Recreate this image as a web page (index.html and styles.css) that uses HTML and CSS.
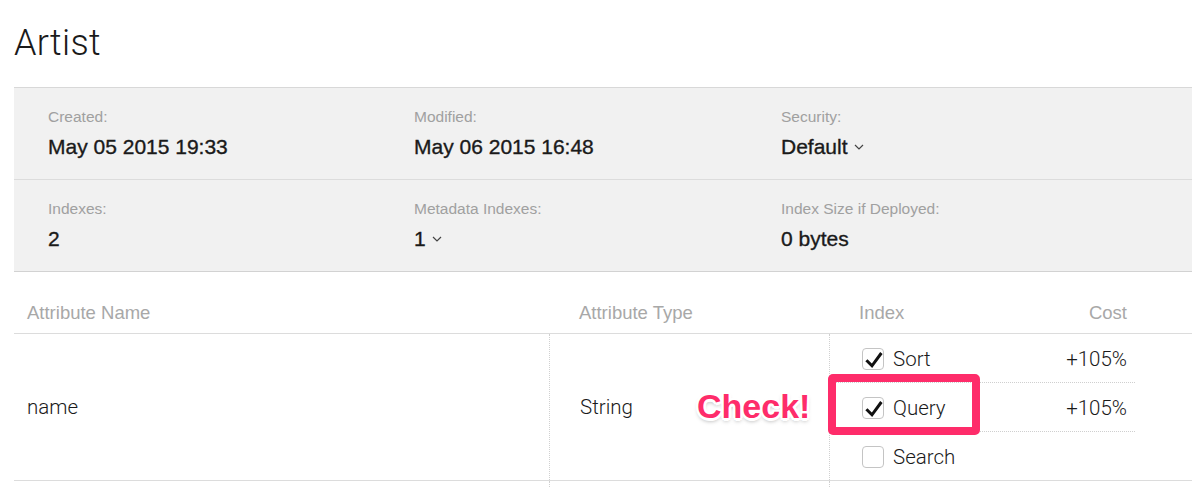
FILE: index.html
```html
<!DOCTYPE html>
<html lang="en">
<head>
    <meta charset="UTF-8">
    <title>Artist</title>
    <link rel="stylesheet" href="styles.css">
</head>
<body>
    <div class="page">
        <h1 class="title">Artist</h1>

        <section class="summary">
            <div class="summary-row">
                <div class="field">
                    <div class="field-label">Created:</div>
                    <div class="field-value">May 05 2015 19:33</div>
                </div>
                <div class="field">
                    <div class="field-label">Modified:</div>
                    <div class="field-value">May 06 2015 16:48</div>
                </div>
                <div class="field">
                    <div class="field-label">Security:</div>
                    <div class="field-value">Default
                        <svg class="chevron" width="10" height="6" viewBox="0 0 10 6"><path d="M1 1 L5 5 L9 1" /></svg>
                    </div>
                </div>
            </div>
            <div class="summary-row">
                <div class="field">
                    <div class="field-label">Indexes:</div>
                    <div class="field-value">2</div>
                </div>
                <div class="field">
                    <div class="field-label">Metadata Indexes:</div>
                    <div class="field-value">1
                        <svg class="chevron" width="10" height="6" viewBox="0 0 10 6"><path d="M1 1 L5 5 L9 1" /></svg>
                    </div>
                </div>
                <div class="field">
                    <div class="field-label">Index Size if Deployed:</div>
                    <div class="field-value">0 bytes</div>
                </div>
            </div>
        </section>

        <div class="attr-table">
            <div class="attr-head">
                <div class="head-name">Attribute Name</div>
                <div class="head-type">Attribute Type</div>
                <div class="head-index"><span>Index</span><span>Cost</span></div>
            </div>

            <div class="attr-row">
                <div class="cell-name">name</div>
                <div class="cell-type">String</div>
                <div class="cell-index">
                    <div class="index-opt">
                        <svg class="checkbox" width="22" height="22" viewBox="0 0 22 22"><rect x="0.5" y="0.5" width="21" height="21" rx="3.5" /><path d="M4.4 12.2 L10 17.8 L19.4 5" /></svg>
                        <span class="opt-label">Sort</span>
                        <span class="opt-cost">+105%</span>
                    </div>
                    <div class="index-opt">
                        <svg class="checkbox" width="22" height="22" viewBox="0 0 22 22"><rect x="0.5" y="0.5" width="21" height="21" rx="3.5" /><path d="M4.4 12.2 L10 17.8 L19.4 5" /></svg>
                        <span class="opt-label">Query</span>
                        <span class="opt-cost">+105%</span>
                    </div>
                    <div class="index-opt">
                        <svg class="checkbox" width="22" height="22" viewBox="0 0 22 22"><rect x="0.5" y="0.5" width="21" height="21" rx="3.5" /></svg>
                        <span class="opt-label">Search</span>
                    </div>
                </div>

                <!-- annotation -->
                <div class="callout">Check!</div>
                <div class="highlight"></div>
            </div>

            <div class="attr-row attr-row-next">
                <div class="cell-name"></div>
                <div class="cell-type"></div>
                <div class="cell-index"></div>
            </div>
        </div>
    </div>
</body>
</html>
```

FILE: styles.css
```css
body {
    margin: 0;
    background: #fff;
    font-family: "Liberation Sans", Arial, sans-serif;
    color: #1c1c1c;
    overflow: hidden;
}
.page {
    padding: 0 8px 0 14px;
}
.title {
    margin: 0;
    height: 87px;
    box-sizing: border-box;
    padding-top: 21px;
    font-family: Roboto, "Liberation Sans", sans-serif;
    font-size: 36px;
    line-height: 44px;
    font-weight: 300;
    letter-spacing: 0.3px;
    color: #1a1a1a;
}

/* Summary panel */
.summary {
    background: #f1f1f1;
    border-top: 1px solid #d8d8d8;
    border-bottom: 1px solid #d2d2d2;
}
.summary-row {
    display: grid;
    grid-template-columns: 366px 367px 1fr;
    padding: 20px 0 20px 34px;
}
.summary-row + .summary-row {
    border-top: 1px solid #dcdcdc;
}
.field-label {
    font-size: 15.5px;
    line-height: 18px;
    color: #a0a0a0;
}
.field-value {
    margin-top: 9px;
    font-size: 21px;
    line-height: 24px;
    color: #1a1a1a;
    -webkit-text-stroke: 0.35px #1a1a1a;
    display: flex;
    align-items: center;
    gap: 6px;
}
.chevron path {
    fill: none;
    stroke: #444;
    stroke-width: 1.2;
}

/* Attribute table */
.attr-head {
    display: grid;
    grid-template-columns: 535px 280px 1fr;
    padding: 30px 0 9px;
    border-bottom: 1px solid #dcdcdc;
    font-size: 18.5px;
    line-height: 22px;
    color: #a8a8a8;
}
.head-name {
    padding-left: 13px;
}
.head-type {
    padding-left: 30px;
}
.head-index {
    display: flex;
    justify-content: space-between;
    padding: 0 65px 0 30px;
}
.attr-row {
    position: relative;
    display: grid;
    grid-template-columns: 535px 280px 1fr;
    border-bottom: 1px solid #dcdcdc;
    font-family: Roboto, "Liberation Sans", sans-serif;
    font-size: 20.5px;
    font-weight: 300;
    color: #1a1a1a;
}
.cell-name {
    display: flex;
    align-items: center;
    padding-left: 13px;
}
.cell-type {
    display: flex;
    align-items: center;
    padding-left: 30px;
    border-left: 1px dotted #d0d0d0;
}
.cell-index {
    border-left: 1px dotted #d0d0d0;
    padding-right: 57px;
    min-height: 146px;
}
.attr-row-next {
    border-bottom: none;
}
.attr-row-next .cell-index {
    min-height: 6px;
}
.index-opt {
    display: flex;
    align-items: center;
    height: 48px;
    padding: 1px 8px 0 32px;
    box-sizing: border-box;
}
.index-opt + .index-opt {
    height: 49px;
    border-top: 1px dotted #cfcfcf;
}
.checkbox {
    margin-right: 9px;
}
.checkbox rect {
    fill: #fff;
    stroke: #c4c4c4;
}
.checkbox path {
    fill: none;
    stroke: #111;
    stroke-width: 3;
}
.opt-cost {
    margin-left: auto;
}

/* Annotation over the table */
.highlight {
    position: absolute;
    left: 814px;
    top: 40px;
    width: 152px;
    height: 61px;
    box-sizing: border-box;
    border: 8px solid #fe2c6a;
    border-radius: 5px;
}
.callout {
    position: absolute;
    left: 683px;
    top: 52px;
    font-family: "Liberation Sans", sans-serif;
    font-size: 34px;
    line-height: 40px;
    font-weight: bold;
    color: #fe2c6a;
    text-shadow:
        2.5px 0 0 #fff, -2.5px 0 0 #fff, 0 2.5px 0 #fff, 0 -2.5px 0 #fff,
        1.8px 1.8px 0 #fff, -1.8px 1.8px 0 #fff, 1.8px -1.8px 0 #fff, -1.8px -1.8px 0 #fff,
        0 3px 4px rgba(0, 0, 0, 0.35);
}
```
